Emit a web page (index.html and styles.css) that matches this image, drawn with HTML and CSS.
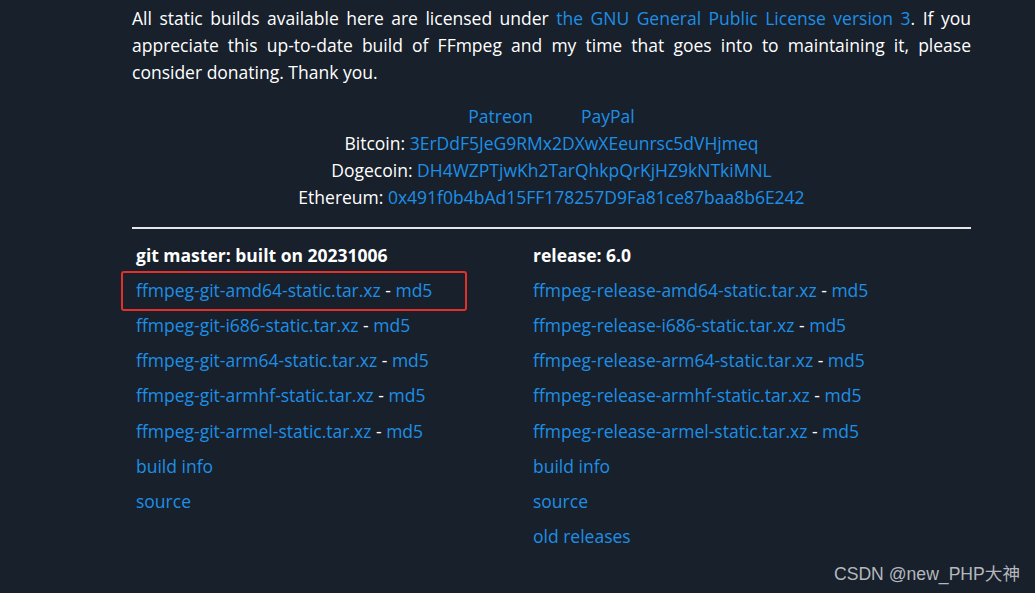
FILE: index.html
```html
<!DOCTYPE html>
<html lang="en">
<head>
  <meta charset="UTF-8">
  <title>FFmpeg Static Builds</title>
  <link rel="stylesheet" href="styles.css">
</head>
<body>

<div class="content">
  <p class="license">All static builds available here are licensed under <a href="#">the GNU General Public License version 3</a>. If you appreciate this up-to-date build of FFmpeg and my time that goes into to maintaining it, please consider donating. Thank you.</p>

  <div class="donate">
    <div class="donate-links"><a href="#">Patreon</a><a href="#">PayPal</a></div>
    <div>Bitcoin: <a href="#">3ErDdF5JeG9RMx2DXwXEeunrsc5dVHjmeq</a></div>
    <div>Dogecoin: <a href="#">DH4WZPTjwKh2TarQhkpQrKjHZ9kNTkiMNL</a></div>
    <div>Ethereum: <a href="#">0x491f0b4bAd15FF178257D9Fa81ce87baa8b6E242</a></div>
  </div>

  <hr>

  <div class="builds">
    <div class="build-col">
      <h3>git master: built on 20231006</h3>
      <div class="row marked"><a href="#">ffmpeg-git-amd64-static.tar.xz</a> - <a href="#">md5</a></div>
      <div class="row"><a href="#">ffmpeg-git-i686-static.tar.xz</a> - <a href="#">md5</a></div>
      <div class="row"><a href="#">ffmpeg-git-arm64-static.tar.xz</a> - <a href="#">md5</a></div>
      <div class="row"><a href="#">ffmpeg-git-armhf-static.tar.xz</a> - <a href="#">md5</a></div>
      <div class="row"><a href="#">ffmpeg-git-armel-static.tar.xz</a> - <a href="#">md5</a></div>
      <div class="row"><a href="#">build info</a></div>
      <div class="row"><a href="#">source</a></div>
    </div>
    <div class="build-col">
      <h3>release: 6.0</h3>
      <div class="row"><a href="#">ffmpeg-release-amd64-static.tar.xz</a> - <a href="#">md5</a></div>
      <div class="row"><a href="#">ffmpeg-release-i686-static.tar.xz</a> - <a href="#">md5</a></div>
      <div class="row"><a href="#">ffmpeg-release-arm64-static.tar.xz</a> - <a href="#">md5</a></div>
      <div class="row"><a href="#">ffmpeg-release-armhf-static.tar.xz</a> - <a href="#">md5</a></div>
      <div class="row"><a href="#">ffmpeg-release-armel-static.tar.xz</a> - <a href="#">md5</a></div>
      <div class="row"><a href="#">build info</a></div>
      <div class="row"><a href="#">source</a></div>
      <div class="row"><a href="#">old releases</a></div>
    </div>
  </div>
</div>

<div class="watermark">CSDN @new_PHP大神</div>

</body>
</html>
```

FILE: styles.css
```css
body {
  margin: 0;
  background-color: #18202b;
  color: #fff;
  font-family: "Open Sans", "Noto Sans", sans-serif;
  font-size: 17.5px;
  height: 593px;
  overflow: hidden;
}
a {
  color: #1e8fe6;
  text-decoration: none;
}
.content {
  width: 839px;
  margin-left: 132px;
  padding-top: 5px;
}
.license {
  margin: 0;
  line-height: 27px;
  text-align: justify;
}
.donate {
  margin-top: 17px;
  text-align: center;
  line-height: 27px;
}
.donate-links a {
  margin: 0 24px;
}
hr {
  margin: 16px 0 0;
  border: none;
  height: 2px;
  background-color: #e6e6e6;
}
.builds {
  display: grid;
  grid-template-columns: 397px 1fr;
  padding: 9px 4px 0;
}
.build-col h3 {
  margin: 0;
  font-size: 17.5px;
  font-weight: bold;
  line-height: 35px;
}
.row {
  line-height: 35.15px;
}
.marked {
  position: relative;
}
.marked::after {
  content: "";
  position: absolute;
  left: -15px;
  top: -2px;
  width: 342px;
  height: 36px;
  border: 2px solid #e3302b;
  border-radius: 3px;
}
.watermark {
  position: absolute;
  right: 15px;
  bottom: 8px;
  color: #b4b8bd;
  font-family: "Liberation Sans", "Noto Sans CJK SC", sans-serif;
  font-size: 17.6px;
}
```
